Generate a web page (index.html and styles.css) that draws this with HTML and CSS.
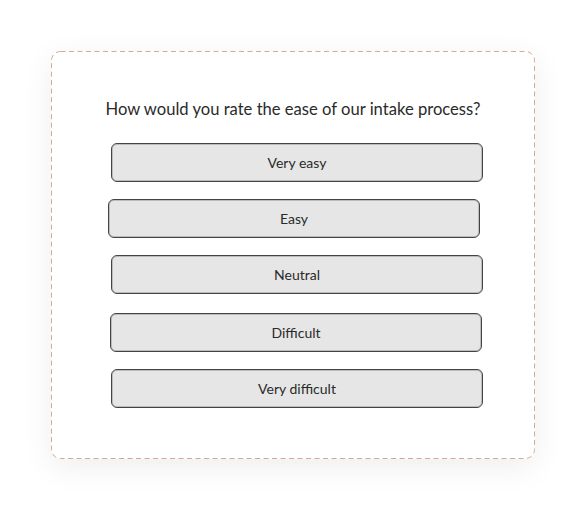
FILE: index.html
```html
<!DOCTYPE html>
<html lang="en">
<head>
<meta charset="utf-8">
<title>Intake survey</title>
<link rel="stylesheet" href="styles.css">
</head>
<body>
<main class="page">
  <section class="card">
    <svg class="card-outline" width="100%" height="100%" aria-hidden="true">
      <rect x="0.5" y="0.5" width="483" height="407" rx="9" ry="9"></rect>
    </svg>
    <h1 class="question">How would you rate the ease of our intake process?</h1>
    <div class="options">
      <button class="option">Very easy</button>
      <button class="option option--left">Easy</button>
      <button class="option">Neutral</button>
      <button class="option option--low">Difficult</button>
      <button class="option">Very difficult</button>
    </div>
  </section>
</main>
</body>
</html>
```
FILE: styles.css
```css
html, body {
  margin: 0;
  padding: 0;
  background: #ffffff;
}
.page {
  width: 586px;
  height: 510px;
  display: flex;
  align-items: center;
  justify-content: center;
  font-family: "Lato", "Open Sans", sans-serif;
  color: #2a2a2a;
}
.card {
  position: relative;
  box-sizing: border-box;
  width: 484px;
  height: 408px;
  border-radius: 9px;
  background: #ffffff;
  box-shadow: 0 8px 32px rgba(0, 0, 0, 0.07);
  padding-top: 47px;
  display: flex;
  flex-direction: column;
  align-items: center;
}
.card-outline {
  position: absolute;
  inset: 0;
  pointer-events: none;
}
.card-outline rect {
  fill: none;
  stroke: #d2aa95;
  stroke-width: 1;
  stroke-dasharray: 5 3.5;
}
.question {
  margin: 0;
  font-size: 16.6px;
  font-weight: 400;
  line-height: 22px;
  color: #2a2a2a;
}
.options {
  margin-top: 23px;
  display: flex;
  flex-direction: column;
  gap: 17px;
  width: 372px;
  margin-left: 8px;
}
.option {
  box-sizing: border-box;
  width: 372px;
  height: 39px;
  border: 1px solid #444444;
  box-shadow: inset 0 0 0 1px rgba(0, 0, 0, 0.18);
  border-radius: 6px;
  background: #e6e6e6;
  font-family: inherit;
  font-size: 14px;
  color: #2a2a2a;
  padding: 0;
}
.option--left {
  margin-left: -3px;
}
.option--low {
  margin-left: -1px;
  margin-top: 2px;
}
```
